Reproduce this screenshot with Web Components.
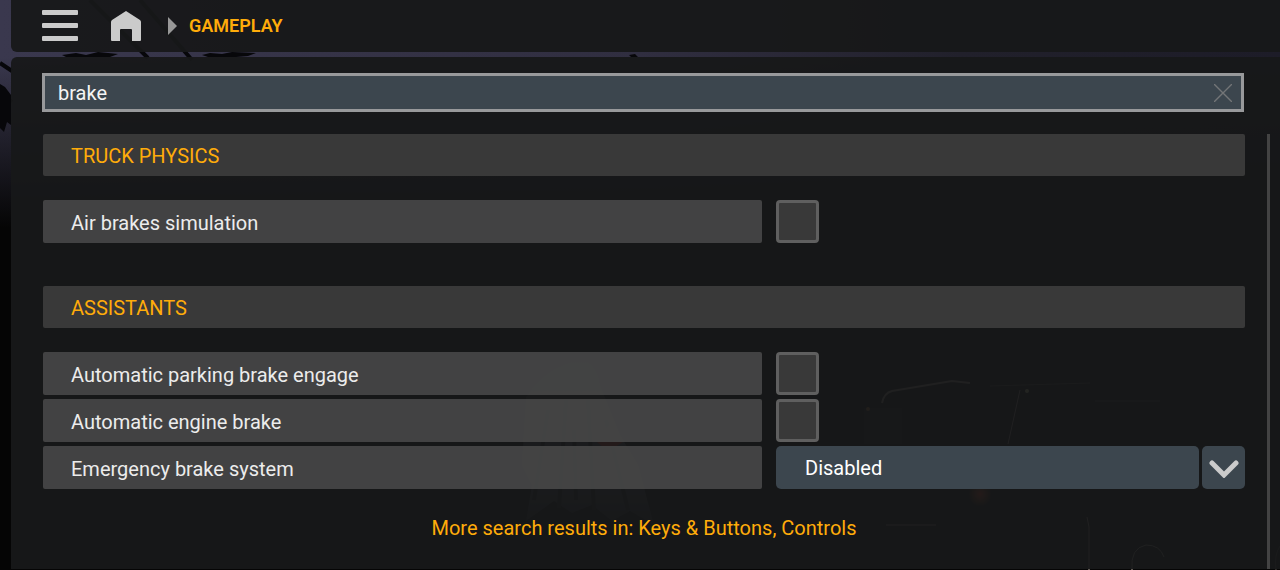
<!DOCTYPE html>
<html lang="en">
<head>
<meta charset="utf-8">
<meta name="viewport" content="width=device-width, initial-scale=1">
<title>Gameplay</title>
<style>
  body {
    margin: 0;
    background: #050505;
    color: #ececec;
    font-family: Roboto, "Liberation Sans", sans-serif;
    font-size: 20px;
    line-height: 24px;
    --accent: #ffac0a;
    --panel: rgba(23, 24, 25, 0.95);
    --field: #3c464e;
    --icon: #cbcbcb;
  }
</style>
</head>
<body>
<game-screen>
  <game-scene slot="scene"></game-scene>
  <top-bar slot="bar" page="GAMEPLAY"></top-bar>
  <search-field slot="search" value="brake"></search-field>
  <setting-group heading="TRUCK PHYSICS">
    <setting-check label="Air brakes simulation"></setting-check>
  </setting-group>
  <setting-group heading="ASSISTANTS">
    <setting-check label="Automatic parking brake engage"></setting-check>
    <setting-check label="Automatic engine brake"></setting-check>
    <setting-choice label="Emergency brake system" options="Disabled,Enabled"></setting-choice>
  </setting-group>
  <more-results>More search results in: Keys &amp; Buttons, Controls</more-results>
</game-screen>

<script>
class GameScreen extends HTMLElement {
  constructor() {
    super();
    this.attachShadow({ mode: "open" });
    this.shadowRoot.innerHTML = `
    <style>
    :host {
      display: grid;
      min-height: 100vh;
    }
    .scene, .ui {
      grid-area: 1 / 1;
      min-width: 0;
    }
    .scene {
      display: grid;
      overflow: hidden;
    }
    .ui {
      display: flex;
      flex-direction: column;
      gap: 5px;
      padding: 0 0 1px 11px;
      z-index: 1;
    }
    main {
      flex: 1;
      display: flex;
      flex-direction: column;
      gap: 22px;
      padding: 16px 10px 0 31px;
      border-radius: 6px 0 0 0;
      background: var(--panel);
    }
    .search {
      padding-right: 26px;
    }
    .results {
      flex: 1;
      display: flex;
      gap: 22px;
    }
    .list {
      flex: 1;
      min-width: 0;
      display: flex;
      flex-direction: column;
      gap: 43px;
      padding-left: 1px;
    }
    .scroll {
      width: 3px;
      background: #434343;
    }
    </style>
    <div class="scene"><slot name="scene"></slot></div>
    <div class="ui">
      <slot name="bar"></slot>
      <main>
        <div class="search"><slot name="search"></slot></div>
        <div class="results">
          <div class="list"><slot></slot></div>
          <div class="scroll"></div>
        </div>
      </main>
    </div>
  `;
  }
}

// night yard behind the panels: branches, a hanging ghost and a parked truck
class GameScene extends HTMLElement {
  constructor() {
    super();
    this.attachShadow({ mode: "open" });
    this.shadowRoot.innerHTML = `
    <style>
    :host {
      display: block;
      overflow: hidden;
      contain: size;
    }
    svg {
      display: block;
      width: 100%;
      height: 100%;
    }
    </style>
    <svg viewBox="0 0 1280 570" preserveAspectRatio="xMinYMin slice" aria-hidden="true">
      <defs>
        <linearGradient id="sky" x2="1" y2="0">
          <stop offset="0" stop-color="#3a384e"/>
          <stop offset=".5" stop-color="#302e40"/>
          <stop offset=".75" stop-color="#21202b"/>
          <stop offset="1" stop-color="#1d1c28"/>
        </linearGradient>
        <linearGradient id="ground" x2="0" y2="1">
          <stop offset=".1" stop-color="#050505" stop-opacity="0"/>
          <stop offset=".4" stop-color="#050505"/>
        </linearGradient>
        <linearGradient id="sheet" x2="0" y2="1">
          <stop offset="0" stop-color="#40424c" stop-opacity=".2"/>
          <stop offset=".6" stop-color="#626574"/>
          <stop offset="1" stop-color="#626574" stop-opacity=".3"/>
        </linearGradient>
        <radialGradient id="lamp">
          <stop offset="0" stop-color="#ff4a20"/>
          <stop offset="1" stop-color="#ff7a20" stop-opacity="0"/>
        </radialGradient>
      </defs>
      <rect width="1280" height="570" fill="url(#sky)"/>
      <rect width="1280" height="570" fill="url(#ground)"/>
      <g fill="none" stroke="#07070a" stroke-width="4">
        <path d="M0 63l12 8M0 92l12 10M90 0l58 58M140 0l52 60"/>
      </g>
      <path fill="#07070a" d="M62 55l14-2 10 2 12-3 20 2-8 3H66zM202 55l8-2 12 1 10-2 24 1-8 3-12 1H208zM629 55l6-1 3 3h-7zM0 84l5 3 6 8v30l-4-3-3 10-4-4z"/>
      <path fill="url(#sheet)" d="M580 360q16 0 20 25l20 50 18 30 16 60-24-14-18 10-20-16-20 8-18-12-28 20 6-36-10-20 4-68q22-32 54-37z"/>
      <path fill="none" stroke="#191b22" stroke-width="4" d="M566 400l-7 108M588 400l6 110M548 410l-14 90M606 420l22 90M574 430l2 70"/>
      <path fill="#ff3a28" d="M593 425l6 4h6l8-5 3 10-5 8h12l-8 5h-12l-6-5z"/>
      <g fill="none" stroke="#b8ada0" stroke-width="1">
        <path stroke-width="2" d="M882 403q2-10 10-12l60-10 18 2"/>
        <path d="M1020 390l-12 54M1087 517l2 10v43M886 525h50M1132 570q-2-22 14-25 14 0 18 12"/>
        <path stroke="#55504a" d="M990 386l100-3M1095 401h65M1276 570q-2-15 4-24"/>
      </g>
      <path fill="#444" d="M864 408h38v36h-38z" opacity=".4"/>
      <ellipse cx="980" cy="494" rx="12" ry="13" fill="url(#lamp)"/>
      <circle cx="1027" cy="391" r="2" fill="#fff0b0"/>
      <circle cx="868" cy="409" r="2" fill="#d08a40"/>
    </svg>
  `;
  }
}

class TopBar extends HTMLElement {
  constructor() {
    super();
    this.attachShadow({ mode: "open" });
    this.shadowRoot.innerHTML = `
    <style>
    :host {
      display: block;
    }
    nav {
      display: flex;
      align-items: center;
      height: 52px;
      padding-left: 31px;
      border-radius: 0 0 0 6px;
      background: var(--panel);
    }
    button, a {
      display: block;
      padding: 0;
      border: 0;
      background: none;
      color: var(--icon);
    }
    a {
      margin: 0 27px 0 33px;
    }
    svg {
      display: block;
      fill: currentColor;
    }
    .arrow {
      margin-right: 12px;
      color: #989898;
    }
    .page {
      color: var(--accent);
      font-size: 18px;
      font-weight: 600;
    }
    </style>
    <nav>
      <button type="button" aria-label="Menu">
        <svg width="36" height="32" viewBox="0 0 36 32">
          <rect y="0" width="36" height="5" rx="1"/>
          <rect y="13" width="36" height="5" rx="1"/>
          <rect y="26" width="36" height="5" rx="1"/>
        </svg>
      </button>
      <a href="#home" aria-label="Home">
        <svg width="30" height="30" viewBox="0 0 30 30">
          <path d="M15 0l14 9q1 1 1 2v18q0 1-1 1h-8V19q0-1-1-1H10q-1 0-1 1v11H1q-1 0-1-1V11q0-1 1-2z"/>
        </svg>
      </a>
      <svg class="arrow" width="9" height="18" viewBox="0 0 9 18"><path d="M0 0l9 9-9 9z"/></svg>
      <span class="page">${this.getAttribute("page")}</span>
    </nav>
  `;
  }
}

class SearchField extends HTMLElement {
  constructor() {
    super();
    this.attachShadow({ mode: "open" });
    this.shadowRoot.innerHTML = `
    <style>
    :host {
      display: flex;
      align-items: center;
      box-sizing: border-box;
      height: 39px;
      padding: 1px 9px 0 13px;
      border: 3px solid #98999b;
      background: var(--field);
    }
    input {
      flex: 1;
      min-width: 0;
      padding: 0;
      border: 0;
      outline: 0;
      background: none;
      color: #f4f4f4;
      font: inherit;
    }
    button {
      padding: 0;
      border: 0;
      background: none;
      color: #737577;
    }
    svg {
      display: block;
    }
    </style>
    <input type="text" aria-label="Search settings" value="${this.getAttribute("value")}">
    <button type="button" aria-label="Clear">
      <svg width="18" height="18" viewBox="0 0 18 18" fill="none" stroke="currentColor" stroke-width="1.4">
        <path d="M0 0l18 18M18 0L0 18"/>
      </svg>
    </button>
  `;
    const input = this.shadowRoot.querySelector("input");
    this.shadowRoot.querySelector("button").addEventListener("click", () => {
      input.value = "";
      input.focus();
    });
  }
}

class SettingGroup extends HTMLElement {
  constructor() {
    super();
    this.attachShadow({ mode: "open" });
    this.shadowRoot.innerHTML = `
    <style>
    :host {
      display: block;
    }
    h2 {
      margin: 0 0 24px;
      padding: 10px 28px 8px;
      border-radius: 2px;
      background: #393939;
      color: var(--accent);
      font-size: 20px;
      font-weight: 400;
    }
    .rows {
      display: flex;
      flex-direction: column;
      gap: 4px;
    }
    </style>
    <h2>${this.getAttribute("heading")}</h2>
    <div class="rows"><slot></slot></div>
  `;
  }
}

// label bar on the left, control on the right
class SettingRow extends HTMLElement {
  constructor() {
    super();
    this.attachShadow({ mode: "open" });
    this.shadowRoot.innerHTML = `
    <style>
    :host {
      display: grid;
      grid-template-columns: 719fr 469fr;
      gap: 14px;
      height: 43px;
    }
    label {
      padding: 11px 28px 8px;
      border-radius: 2px;
      background: rgba(69, 69, 69, 0.96);
    }
    .control {
      display: flex;
      gap: 3px;
      min-width: 0;
    }
    input {
      appearance: none;
      box-sizing: border-box;
      width: 43px;
      height: 43px;
      margin: 0;
      border: 3px solid #5f5f5f;
      border-radius: 4px;
      background: #393939;
    }
    input:checked {
      background: var(--accent);
    }
    select {
      appearance: none;
      flex: 1;
      min-width: 0;
      padding: 1px 29px 0;
      border: 0;
      border-radius: 5px;
      background: var(--field);
      color: #fff;
      font: inherit;
    }
    button {
      display: grid;
      place-items: center;
      width: 43px;
      padding: 0;
      border: 0;
      border-radius: 5px;
      background: var(--field);
      color: var(--icon);
    }
    </style>
    <label for="control">${this.getAttribute("label")}</label>
    <div class="control">${this.control()}</div>
  `;
  }
}

class SettingCheck extends SettingRow {
  control() {
    return `<input id="control" type="checkbox">`;
  }
}

class SettingChoice extends SettingRow {
  constructor() {
    super();
    const select = this.shadowRoot.querySelector("select");
    this.shadowRoot.querySelector("button").addEventListener("click", () => select.showPicker());
  }

  control() {
    const options = this.getAttribute("options").split(",");
    return `
      <select id="control">${options.map((o) => `<option>${o}</option>`).join("")}</select>
      <button type="button" aria-label="Open list">
        <svg width="30" height="20" viewBox="0 0 30 20" fill="none" stroke="currentColor" stroke-width="5" stroke-linecap="round">
          <path d="M3 5l12 12L27 5"/>
        </svg>
      </button>`;
  }
}

class MoreResults extends HTMLElement {
  constructor() {
    super();
    this.attachShadow({ mode: "open" });
    this.shadowRoot.innerHTML = `
    <style>
    :host {
      display: block;
      margin-top: -16px;
      color: var(--accent);
      text-align: center;
    }
    </style>
    <slot></slot>
  `;
  }
}

customElements.define("game-screen", GameScreen);
customElements.define("game-scene", GameScene);
customElements.define("top-bar", TopBar);
customElements.define("search-field", SearchField);
customElements.define("setting-group", SettingGroup);
customElements.define("setting-check", SettingCheck);
customElements.define("setting-choice", SettingChoice);
customElements.define("more-results", MoreResults);
</script>
</body>
</html>
